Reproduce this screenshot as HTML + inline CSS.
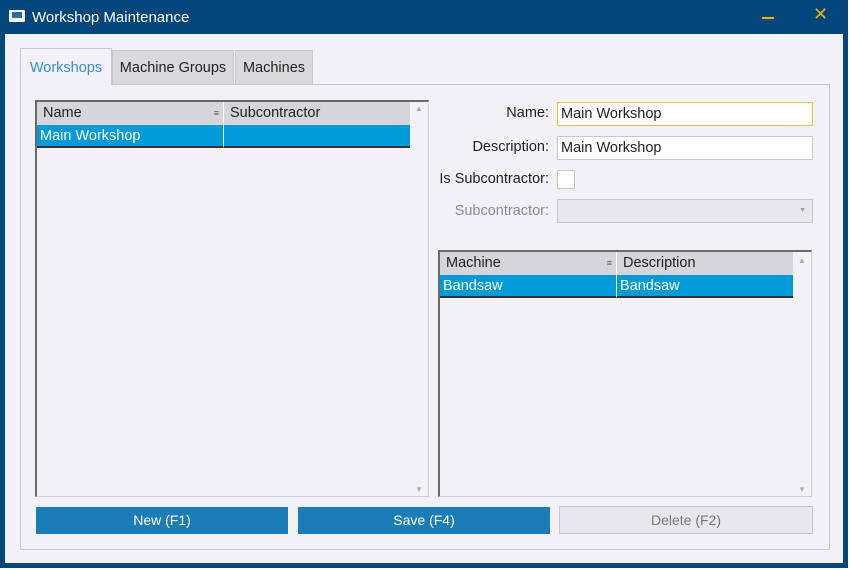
<!DOCTYPE html>
<html><head><style>
*{box-sizing:border-box;margin:0;padding:0}
body{width:850px;height:570px;background:#fff;font-family:"Liberation Sans",sans-serif;font-size:14.5px;color:#222;position:relative;overflow:hidden}
.a{position:absolute}
.win{left:0;top:0;width:848px;height:568px;background:#00457c}
.inner{left:5px;top:34px;width:838px;height:529px;background:#f2f2f6}
.tab{height:34px;line-height:34px;text-align:center;font-size:14.5px;color:#222;background:#d9d9dc;border:1px solid #c8c8cc;border-bottom:none}
.grid{background:#f2f2f6;border:1px solid #cfcfd3;border-top:2px solid #6a6a6a;border-left:2px solid #6a6a6a}
.hd{background:#d6d6da;height:23px;line-height:23px;padding-left:6px;color:#222}
.row{background:#009ad8;color:#fff;height:23px;line-height:22px;padding-left:3px;border-bottom:2px solid #333}
.lbl{text-align:right;width:200px;font-size:14.5px}
.inp{background:#fff;border:1px solid #c8c8cc;height:24px;line-height:22px;padding-left:3px;font-size:14.5px}
.btn{height:27px;line-height:27px;text-align:center;color:#fff;background:#1a7db8;font-size:14px}
</style></head><body>
<div class="a win"></div>
<div class="a" style="left:9px;top:10px;width:16px;height:12px;background:#fff;border-radius:1px"></div>
<div class="a" style="left:12px;top:12px;width:10px;height:6px;background:#2b6ca8"></div>
<div class="a" style="left:32px;top:9px;color:#fff;font-size:15px">Workshop Maintenance</div>
<div class="a" style="left:762px;top:17px;width:12px;height:2px;background:#e8b400"></div>
<div class="a" style="left:813px;top:4px;color:#e8b400;font-size:18px">✕</div>
<div class="a inner"></div>
<div class="a" style="left:20px;top:84px;width:810px;height:466px;border:1px solid #c8c8cc;background:#f2f2f6"></div>
<div class="a tab" style="left:20px;top:48px;width:92px;height:37px;background:#f2f2f6;color:#3a8fc8;line-height:38px">Workshops</div>
<div class="a tab" style="left:112px;top:50px;width:122px">Machine Groups</div>
<div class="a tab" style="left:235px;top:50px;width:78px">Machines</div>

<div class="a grid" style="left:35px;top:100px;width:394px;height:397px"></div>
<div class="a hd" style="left:37px;top:102px;width:186px">Name<span style="float:right;margin-right:4px;font-size:9px;color:#555">≡</span></div>
<div class="a hd" style="left:223px;top:102px;width:187px;border-left:1px solid #fff">Subcontractor</div>
<div class="a row" style="left:37px;top:125px;width:186px">Main Workshop</div>
<div class="a row" style="left:223px;top:125px;width:187px;border-left:1px solid #fff"></div>
<div class="a" style="left:415px;top:104px;font-size:8px;color:#aaa">▲</div>
<div class="a" style="left:415px;top:485px;font-size:8px;color:#aaa">▼</div>

<div class="a lbl" style="left:349px;top:105px">Name:</div>
<div class="a inp" style="left:557px;top:102px;width:256px;border-color:#f0c040">Main Workshop</div>
<div class="a lbl" style="left:349px;top:139px">Description:</div>
<div class="a inp" style="left:557px;top:136px;width:256px">Main Workshop</div>
<div class="a lbl" style="left:349px;top:171px">Is Subcontractor:</div>
<div class="a inp" style="left:557px;top:170px;width:18px;height:19px"></div>
<div class="a lbl" style="left:349px;top:203px;color:#8a8a90">Subcontractor:</div>
<div class="a inp" style="left:557px;top:199px;width:256px;background:#e8e8ec"><span style="float:right;margin-right:6px;font-size:7px;color:#999">▼</span></div>

<div class="a grid" style="left:438px;top:250px;width:374px;height:247px"></div>
<div class="a hd" style="left:440px;top:252px;width:176px">Machine<span style="float:right;margin-right:4px;font-size:9px;color:#555">≡</span></div>
<div class="a hd" style="left:616px;top:252px;width:177px;border-left:1px solid #fff">Description</div>
<div class="a row" style="left:440px;top:275px;width:176px">Bandsaw</div>
<div class="a row" style="left:616px;top:275px;width:177px;border-left:1px solid #fff">Bandsaw</div>
<div class="a" style="left:798px;top:256px;font-size:8px;color:#aaa">▲</div>
<div class="a" style="left:798px;top:485px;font-size:8px;color:#aaa">▼</div>

<div class="a btn" style="left:36px;top:507px;width:252px">New (F1)</div>
<div class="a btn" style="left:298px;top:507px;width:252px">Save (F4)</div>
<div class="a btn" style="left:559px;top:506px;width:254px;height:28px;background:#e8e8ec;color:#777;border:1px solid #c8c8cc">Delete (F2)</div>
</body></html>
